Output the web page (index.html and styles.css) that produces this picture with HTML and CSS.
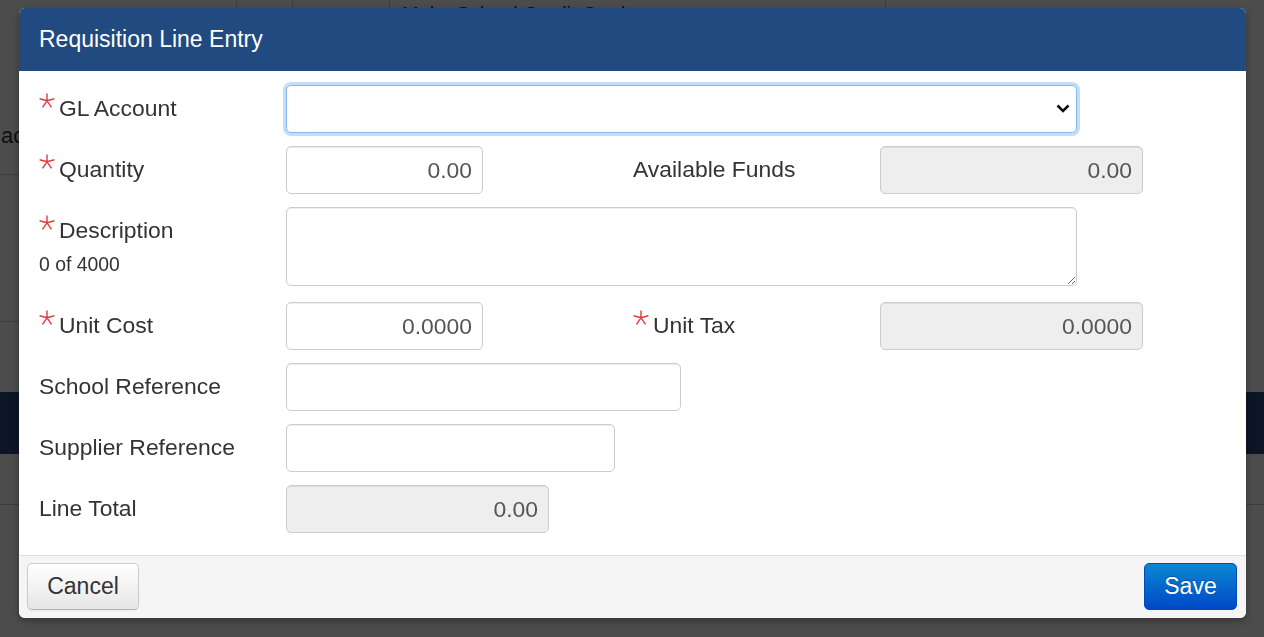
FILE: index.html
```html
<!DOCTYPE html>
<html lang="en">
<head>
<meta charset="utf-8">
<title>Requisition Line Entry</title>
<link rel="stylesheet" href="styles.css">
</head>
<body>
<div class="page">
  <div class="bg-row1">
    <div class="cell c1"></div>
    <div class="cell c2"><span class="bg-icon">&#9638;</span></div>
    <div class="cell c3"></div>
    <div class="cell c4"><span class="bg-text">Make School Credit Card</span><span class="bg-sort">&#9650;</span></div>
    <div class="cell c5"></div>
  </div>
  <div class="bg-row2"><span class="bg-lbl">ack</span></div>
  <div class="bg-row3"></div>
  <div class="bg-gap"></div>
  <div class="bg-nav"></div>
  <div class="bg-row4"></div>
</div>
<div class="backdrop"></div>

<div class="modal">
  <div class="modal-header">
    <h3 class="modal-title">Requisition Line Entry</h3>
  </div>
  <div class="modal-body">
    <div class="row">
      <label class="lbl"><svg class="ast" viewBox="0 0 16 15"><path d="M8 7.8V0.6M8 7.8L15.4 5.8M8 7.8L0.6 5.8M8 7.8L12.5 14.3M8 7.8L3.5 14.3"/></svg>GL Account</label>
      <div class="sel-wrap">
        <select class="ctl sel"><option></option></select>
        <svg class="chev" viewBox="0 0 14 9"><path d="M1.5 1.5L7 7L12.5 1.5"/></svg>
      </div>
    </div>
    <div class="row">
      <label class="lbl"><svg class="ast" viewBox="0 0 16 15"><path d="M8 7.8V0.6M8 7.8L15.4 5.8M8 7.8L0.6 5.8M8 7.8L12.5 14.3M8 7.8L3.5 14.3"/></svg>Quantity</label>
      <input class="ctl num w197" type="text" value="0.00">
      <label class="lbl lbl2">Available Funds</label>
      <input class="ctl num w263" type="text" value="0.00" disabled>
    </div>
    <div class="row row-desc">
      <div class="lbl">
        <label><svg class="ast" viewBox="0 0 16 15"><path d="M8 7.8V0.6M8 7.8L15.4 5.8M8 7.8L0.6 5.8M8 7.8L12.5 14.3M8 7.8L3.5 14.3"/></svg>Description</label>
        <div class="counter">0 of 4000</div>
      </div>
      <textarea class="ctl area"></textarea>
    </div>
    <div class="row">
      <label class="lbl"><svg class="ast" viewBox="0 0 16 15"><path d="M8 7.8V0.6M8 7.8L15.4 5.8M8 7.8L0.6 5.8M8 7.8L12.5 14.3M8 7.8L3.5 14.3"/></svg>Unit Cost</label>
      <input class="ctl num w197" type="text" value="0.0000">
      <label class="lbl lbl2"><svg class="ast" viewBox="0 0 16 15"><path d="M8 7.8V0.6M8 7.8L15.4 5.8M8 7.8L0.6 5.8M8 7.8L12.5 14.3M8 7.8L3.5 14.3"/></svg>Unit Tax</label>
      <input class="ctl num w263" type="text" value="0.0000" disabled>
    </div>
    <div class="row">
      <label class="lbl">School Reference</label>
      <input class="ctl w395" type="text">
    </div>
    <div class="row">
      <label class="lbl">Supplier Reference</label>
      <input class="ctl w329" type="text">
    </div>
    <div class="row">
      <label class="lbl">Line Total</label>
      <input class="ctl num w263" type="text" value="0.00" disabled>
    </div>
  </div>
  <div class="modal-footer">
    <button class="btn btn-default" type="button">Cancel</button>
    <button class="btn btn-primary" type="button">Save</button>
  </div>
</div>
</body>
</html>
```

FILE: styles.css
```css
html, body {
  margin: 0;
  padding: 0;
  height: 100%;
  overflow: hidden;
  font-family: "Liberation Sans", Arial, sans-serif;
}

/* ---------- page behind the dialog ---------- */
.page {
  background: #fff;
  height: 637px;
  overflow: hidden;
}
.bg-row1 {
  display: flex;
  height: 60px;
}
.cell {
  border-right: 1px solid #ccc;
  box-sizing: border-box;
  height: 60px;
  padding-top: 3px;
  font-size: 20px;
  color: #333;
  overflow: hidden;
  white-space: nowrap;
}
.c1 { width: 237px; }
.c2 { width: 56px; text-align: center; }
.c3 { width: 97px; }
.c4 { width: 496px; padding-left: 12px; display: flex; justify-content: space-between; }
.c5 { flex: 1; border-right: 0; }
.bg-icon { color: #c0282d; font-size: 22px; }
.bg-sort { font-size: 13px; color: #555; padding-right: 6px; }
.bg-row2 {
  height: 114px;
  width: 50%;
  border-bottom: 1px solid #ccc;
}
.bg-lbl {
  display: block;
  padding: 63px 0 0 1px;
  font-size: 22px;
  color: #333;
}
.bg-row3 {
  height: 146px;
  width: 50%;
  border-bottom: 1px solid #ccc;
}
.bg-gap { height: 70px; }
.bg-nav {
  height: 62px;
  background: #25497d;
}
.bg-row4 {
  height: 50px;
  border-bottom: 1px solid #ccc;
}
.backdrop {
  position: fixed;
  inset: 0;
  background: rgba(0, 0, 0, 0.7);
}

/* ---------- dialog ---------- */
.modal {
  position: absolute;
  left: 19px;
  top: 8px;
  width: 1227px;
  height: 610px;
  background: #fff;
  border-radius: 6px;
  overflow: hidden;
  display: flex;
  flex-direction: column;
  box-shadow: 0 3px 7px rgba(0, 0, 0, 0.3);
}
.modal-header {
  height: 63px;
  flex: none;
  background: #204a80;
  display: flex;
  align-items: center;
  padding: 0 20px 1px;
  box-sizing: border-box;
}
.modal-title {
  margin: 0;
  color: #fff;
  font-size: 23px;
  font-weight: normal;
  line-height: 30px;
}
.modal-body {
  flex: 1;
  padding: 14px 20px 0;
}
.row {
  display: flex;
  align-items: flex-start;
  margin-bottom: 13px;
}
.row-desc { margin-bottom: 16px; }
.lbl {
  width: 247px;
  flex: none;
  font-size: 22.9px;
  line-height: 46px;
  color: #333;
}
.lbl2 { margin-left: 150px; }
.counter {
  font-size: 19.4px;
  line-height: 20px;
  margin-top: 1px;
}
.ast {
  width: 16px;
  height: 15px;
  vertical-align: 8px;
  margin-right: 4px;
  fill: none;
  stroke: #e03a3e;
  stroke-width: 1.4;
}

.ctl {
  box-sizing: border-box;
  height: 48px;
  margin: 0;
  border: 1px solid #ccc;
  border-radius: 5px;
  background: #fff;
  padding: 0 10px;
  font-family: "Liberation Sans", Arial, sans-serif;
  font-size: 22.9px;
  color: #555;
  box-shadow: inset 0 1px 1px rgba(0, 0, 0, 0.075);
  outline: none;
}
.num { text-align: right; }
.ctl:disabled {
  background: #eee;
  color: #555;
  -webkit-text-fill-color: #555;
  opacity: 1;
}
.sel-wrap {
  position: relative;
  width: 791px;
  height: 48px;
}
.sel {
  width: 791px;
  -webkit-appearance: none;
  appearance: none;
  border-color: #86b9ec;
  box-shadow: 0 0 0 3px #c3def9;
  color: #000;
}
.chev {
  position: absolute;
  right: 7px;
  top: 19px;
  width: 14px;
  height: 9px;
  fill: none;
  stroke: #111;
  stroke-width: 2.6;
  pointer-events: none;
}
.area {
  width: 791px;
  height: 79px;
  padding: 6px 10px;
  text-align: left;
}
.w197 { width: 197px; }
.w263 { width: 263px; }
.w329 { width: 329px; }
.w395 { width: 395px; }

.modal-footer {
  flex: none;
  height: 63px;
  box-sizing: border-box;
  border-top: 1px solid #ddd;
  background: #f5f5f5;
  display: flex;
  justify-content: space-between;
  align-items: flex-start;
  padding: 7px 9px 0 8px;
}
.btn {
  height: 47px;
  margin: 0;
  padding: 0 10px;
  border-radius: 5px;
  font-family: "Liberation Sans", Arial, sans-serif;
  font-size: 23px;
  line-height: 45px;
  cursor: pointer;
}
.btn-default {
  width: 112px;
  color: #333;
  background: linear-gradient(#ffffff, #e6e6e6);
  border: 1px solid #cccccc;
  border-bottom-color: #b3b3b3;
  box-shadow: inset 0 1px 0 rgba(255, 255, 255, 0.2), 0 1px 2px rgba(0, 0, 0, 0.05);
}
.btn-primary {
  width: 93px;
  color: #fff;
  background: linear-gradient(#0a88d2, #0048c8);
  border: 1px solid #0049b8;
  text-shadow: 0 -1px 0 rgba(0, 0, 0, 0.25);
}
```
